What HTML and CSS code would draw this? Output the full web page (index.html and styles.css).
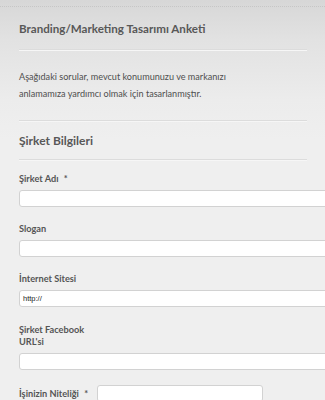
FILE: index.html
```html
<!DOCTYPE html>
<html lang="tr">
<head>
<meta charset="utf-8">
<link rel="stylesheet" href="styles.css">
</head>
<body>
<div class="page">
  <div class="dots"></div>
  <div class="header">
    <h1 class="title">Branding/Marketing Tasarımı Anketi</h1>
    <div class="rule"></div>
    <p class="desc">Aşağıdaki sorular, mevcut konumunuzu ve markanızı anlamamıza yardımcı olmak için tasarlanmıştır.</p>
    <div class="rule"></div>
  </div>
  <div class="section">
    <h2 class="subtitle">Şirket Bilgileri</h2>
    <div class="rule"></div>
  </div>
  <div class="field field-first">
    <label class="label">Şirket Adı <span class="req">*</span></label>
    <div class="input"></div>
  </div>
  <div class="field">
    <label class="label">Slogan</label>
    <div class="input"></div>
  </div>
  <div class="field">
    <label class="label">İnternet Sitesi</label>
    <div class="input"><span class="val">http://</span></div>
  </div>
  <div class="field field-fb">
    <label class="label label-wrap">Şirket Facebook URL'si</label>
    <div class="input"></div>
  </div>
  <div class="field field-row">
    <label class="label">İşinizin Niteliği <span class="req">*</span></label>
    <div class="input input-short"></div>
  </div>
</div>
</body>
</html>
```
FILE: styles.css
```css
html, body {
  margin: 0;
  padding: 0;
}
body {
  background: #efefef;
  font-family: Lato, "Open Sans", sans-serif;
  color: #555;
  overflow: hidden;
}
.page {
  width: 325px;
  overflow: hidden;
  background: linear-gradient(#d7d7d7 0px, #e2e2e2 40px, #ececec 100px, #efefef 140px);
  min-height: 400px;
}
.dots {
  height: 6px;
  border-bottom: 1px dotted #c6c6c6;
}
.header {
  padding-left: 19px;
  width: 288px;
}
.title {
  margin: 0;
  padding-top: 13px;
  font-size: 11.6px;
  font-weight: 700;
  color: #585858;
  line-height: 17px;
  height: 29px;
}
.rule {
  height: 1px;
  background: #dcdcdc;
  border-bottom: 1px solid #f6f6f6;
}
.desc {
  margin: 0;
  padding-top: 17px;
  font-size: 9.1px;
  line-height: 17px;
  color: #4f4f4f;
  width: 232px;
  height: 52px;
}
.section {
  padding-left: 19px;
  width: 288px;
}
.subtitle {
  margin: 0;
  padding-top: 10px;
  font-size: 12px;
  font-weight: 700;
  line-height: 17px;
  height: 27px;
  color: #585858;
}
.field {
  padding-left: 19px;
  padding-top: 16px;
}
.field-first {
  padding-top: 12px;
}
.label {
  display: block;
  font-size: 9.2px;
  font-weight: 700;
  line-height: 12px;
  color: #555;
  margin-bottom: 5px;
}
.req {
  margin-left: 3px;
}
.input {
  box-sizing: border-box;
  height: 17px;
  width: 320px;
  background: #fff;
  border: 1px solid #d2d2d2;
  border-radius: 3px;
  display: flex;
  align-items: center;
  padding-left: 3px;
}
.val {
  font-family: "Liberation Sans", Arial, sans-serif;
  font-size: 7.5px;
  color: #222;
}
.label-wrap {
  width: 70px;
}
.field-fb {
  padding-top: 17px;
}
.field-row {
  display: flex;
  align-items: center;
  padding-top: 15px;
}
.field-row .label {
  margin-bottom: 0;
  width: 78px;
}
.input-short {
  width: 166px;
}
```
